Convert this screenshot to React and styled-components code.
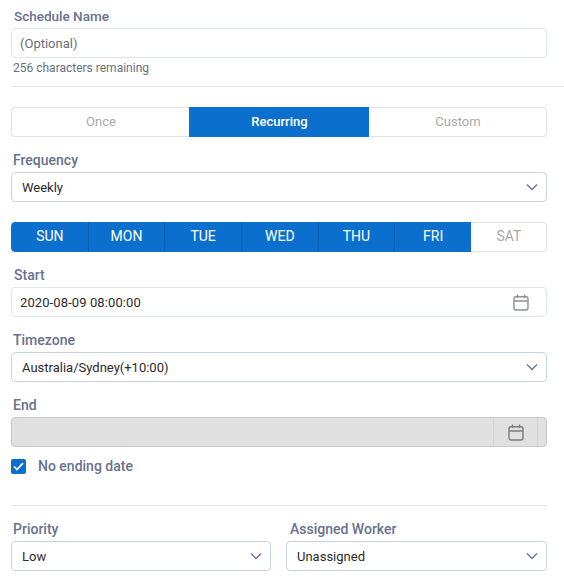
import React from "react";
import styled, { createGlobalStyle } from "styled-components";

const Global = createGlobalStyle`
  html, body { margin: 0; padding: 0; background: #fff; }
  body { font-family: Roboto, "Liberation Sans", Arial, sans-serif; font-size: 13px; color: #333; }
`;

const Page = styled.div`
  width: 564px;
  height: 581px;
  box-sizing: border-box;
  padding: 9px 0 0 11px;
  overflow: hidden;
`;
const Form = styled.div`
  width: 536px;
`;
const Label = styled.div`
  font-size: ${(p) => p.$fs || 14}px;
  line-height: 14px;
  height: 19px;
  font-weight: 500;
  color: #67728f;
  padding-left: ${(p) => p.$indent || 2}px;
`;
const Control = styled.div`
  display: flex;
  align-items: center;
  justify-content: space-between;
  box-sizing: border-box;
  height: 30px;
  padding: 0 ${(p) => p.$pr || 17}px 0 ${(p) => p.$pl || 8}px;
  border: 1px solid ${(p) => p.$border || "#dee5f2"};
  border-radius: 4px;
  background: #fff;
  font-size: 13px;
  color: ${(p) => p.$color || "#2b2b2b"};
`;
const DateText = styled.span`
  letter-spacing: 0.1px;
`;
const Disabled = styled.div`
  display: flex;
  justify-content: flex-end;
  box-sizing: border-box;
  height: 30px;
  padding-right: 8px;
  border: 1px solid #c8c8c8;
  border-radius: 4px;
  background: #e0e0e0;
`;
const DisabledAddon = styled.div`
  width: 43px;
  display: flex;
  align-items: center;
  justify-content: center;
  border-left: 1px solid #d4d4d4;
  border-right: 1px solid #d4d4d4;
`;
const Hint = styled.div`
  font-size: 12px;
  line-height: 14px;
  color: #67707f;
  margin: 3px 0 0 2px;
`;
const Divider = styled.div`
  height: 1px;
  background: #e2e4e9;
  margin-top: ${(p) => p.$mt}px;
  width: ${(p) => p.$w || 553}px;
`;
const Segments = styled.div`
  display: flex;
  height: 30px;
  margin-top: ${(p) => p.$mt || 0}px;
`;
const Segment = styled.div`
  box-sizing: border-box;
  display: flex;
  align-items: center;
  justify-content: center;
  padding: 0 0 ${(p) => p.$pb ?? 1}px 1px;
  flex: ${(p) => (p.$w ? `0 0 ${p.$w}px` : "1 1 0")};
  font-size: ${(p) => p.$fs || 13}px;
  font-weight: ${(p) => (p.$active && p.$bold ? 500 : 400)};
  background: ${(p) => (p.$active ? "#0a6fcd" : "#fff")};
  color: ${(p) => (p.$active ? "#fff" : "#aaa8ad")};
  border: 1px solid ${(p) => (p.$active ? "#0a6fcd" : "#e0e2e6")};
  border-left-color: ${(p) => (p.$active && p.$sep ? "#0861b5" : p.$active ? "#0a6fcd" : "#e0e2e6")};
  border-left-width: ${(p) => (p.$noLeft ? 0 : 1)}px;
  border-right-width: ${(p) => (p.$noRight ? 0 : 1)}px;
  border-radius: ${(p) => (p.$first ? "4px 0 0 4px" : p.$last ? "0 4px 4px 0" : "0")};
`;
const Field = styled.div`
  margin-top: 16px;
`;
const Row = styled.div`
  display: flex;
  gap: 15px;
  margin-top: 16px;
`;
const Col = styled.div`
  flex: ${(p) => `0 0 ${p.$w}px`};
`;
const CheckRow = styled.div`
  display: flex;
  align-items: center;
  gap: 12px;
  height: 16px;
  margin-top: 11px;
`;
const Box = styled.div`
  width: 15px;
  height: 15px;
  border-radius: 2px;
  background: #0a6fcd;
  display: flex;
  align-items: center;
  justify-content: center;
`;
const CheckText = styled.span`
  font-size: 14px;
  line-height: 14px;
  font-weight: 500;
  color: #67728f;
`;

const Chevron = () => (
  <svg width="12" height="8" viewBox="0 0 12 8" fill="none">
    <path d="M1 1.5 6 6.5 11 1.5" stroke="#67789f" strokeWidth="1.5" />
  </svg>
);
const Calendar = ({ color = "#8f8f8f" }) => (
  <svg width="16" height="17" viewBox="0 0 16 17" fill="none" stroke={color} strokeWidth="1.4">
    <rect x="1" y="2.7" width="14" height="13.3" rx="2" />
    <path d="M1 7h14M4.5 .5v3.5M11.5 .5v3.5" />
  </svg>
);

const Select = ({ children }) => (
  <Control $border="#c6d2e6" $pl={10} $pr={8}>
    <span>{children}</span>
    <Chevron />
  </Control>
);

const days = ["SUN", "MON", "TUE", "WED", "THU", "FRI"];

export default function App() {
  return (
    <Page>
      <Global />
      <Form>
        <Label $indent={3} $fs={13.5}>Schedule Name</Label>
        <Control $color="#6a6f78">(Optional)</Control>
        <Hint>256 characters remaining</Hint>
        <Divider $mt={11} />
        <Segments $mt={20}>
          <Segment $w={178} $first $noRight>Once</Segment>
          <Segment $w={180} $active $bold>Recurring</Segment>
          <Segment $last $noLeft>Custom</Segment>
        </Segments>
        <Field>
          <Label>Frequency</Label>
          <Select>Weekly</Select>
        </Field>
        <Segments $mt={20}>
          {days.map((d, i) => (
            <Segment key={d} $w={76.67} $active $fs={14} $pb={2} $first={i === 0} $sep={i > 0}>{d}</Segment>
          ))}
          <Segment $last $noLeft $fs={14} $pb={2}>SAT</Segment>
        </Segments>
        <Field>
          <Label $indent={3}>Start</Label>
          <Control><DateText>2020-08-09 08:00:00</DateText><Calendar /></Control>
        </Field>
        <Field>
          <Label>Timezone</Label>
          <Select>Australia/Sydney(+10:00)</Select>
        </Field>
        <Field>
          <Label>End</Label>
          <Disabled>
            <DisabledAddon><Calendar color="#7c7c7c" /></DisabledAddon>
          </Disabled>
        </Field>
        <CheckRow>
          <Box>
            <svg width="11" height="9" viewBox="0 0 11 9" fill="none">
              <path d="M1 4.5 4 7.5 10 1.2" stroke="#fff" strokeWidth="1.7" />
            </svg>
          </Box>
          <CheckText>No ending date</CheckText>
        </CheckRow>
        <Divider $mt={31} $w={536} />
        <Row>
          <Col $w={260}>
            <Label>Priority</Label>
            <Select>Low</Select>
          </Col>
          <Col $w={261}>
            <Label $indent={4}>Assigned Worker</Label>
            <Select>Unassigned</Select>
          </Col>
        </Row>
      </Form>
    </Page>
  );
}
